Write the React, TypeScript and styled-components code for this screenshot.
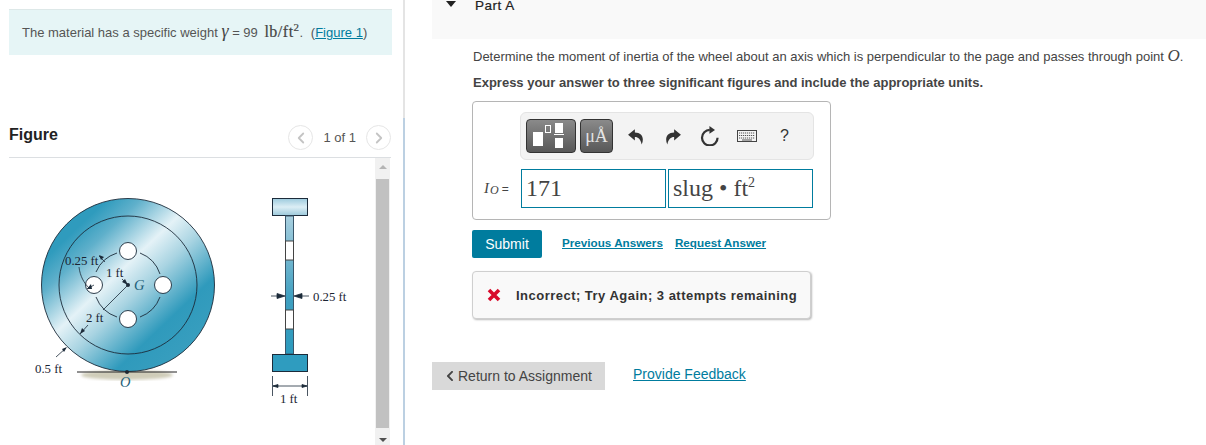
import React from "react";
import styled, { createGlobalStyle } from "styled-components";
import { ChevronLeft, ChevronRight } from "lucide-react";
import { FaChevronLeft } from "react-icons/fa";

const Global = createGlobalStyle`
  html, body { margin: 0; padding: 0; background: #fff; overflow: hidden; }
  body { font-family: "Liberation Sans", Arial, sans-serif; color: #333; }
`;

const Page = styled.div`
  display: flex;
  width: 1206px;
  height: 445px;
  overflow: hidden;
`;

const LeftPane = styled.section`
  width: 403px;
  flex: none;
  padding: 9px 0 0 9px;
  box-sizing: border-box;
  display: flex;
  flex-direction: column;
`;

const Divider = styled.div`
  width: 2px;
  flex: none;
  background: linear-gradient(to bottom, #e4e4e4 0, #e4e4e4 118px, #bcd0e2 118px);
`;

const InfoBox = styled.div`
  width: 383px;
  height: 46px;
  box-sizing: border-box;
  background: #e6f5f6;
  border-top: 1px solid #dde8e8;
  padding: 0 0 2px 13px;
  display: flex;
  align-items: center;
  font-size: 13px;
  color: #555;
`;

const InfoText = styled.p`
  margin: 0;
  white-space: pre;
`;

const MathText = styled.span`
  margin-left: 3px;
  font-family: "Liberation Serif", serif;
  font-size: 16px;
  font-weight: 400;
  color: #444;
  letter-spacing: 0.5px;
  -webkit-text-stroke: 0.2px #444;
  sup { font-size: 11px; line-height: 0; }
`;

const Greek = styled.i`
  font-family: "Liberation Serif", serif;
  font-size: 18px;
  color: #444;
`;

const FigureRef = styled.span`
  margin-left: 4px;
`;

const TextLink = styled.a`
  color: #007c9e;
  text-decoration: underline;
`;

const FigureHeader = styled.header`
  width: 382px;
  height: 48px;
  margin-top: 55px;
  box-sizing: border-box;
  border-bottom: 1px solid #dcdfe2;
  display: flex;
  align-items: center;
  justify-content: space-between;
`;

const FigureTitle = styled.h2`
  margin: 2px 0 0;
  font-size: 16px;
  font-weight: 700;
  color: #222;
`;

const Pager = styled.div`
  display: flex;
  align-items: center;
  gap: 10px;
  font-size: 13px;
  color: #555;
  margin-top: 8px;
`;

const PagerButton = styled.span`
  width: 25px;
  height: 25px;
  box-sizing: border-box;
  border: 1px solid #e6e6e6;
  border-radius: 50%;
  display: flex;
  align-items: center;
  justify-content: center;
  color: #c4c4c4;
`;

const FigureBody = styled.div`
  display: flex;
  width: 382px;
  flex: 1;
  min-height: 0;
`;

const FigureCanvas = styled.svg`
  width: 366px;
  height: 288px;
  flex: none;
  display: block;
`;

const ScrollTrack = styled.div`
  width: 15px;
  height: 288px;
  flex: none;
  background: #f1f1f1;
  display: flex;
  flex-direction: column;
  align-items: center;
  justify-content: space-between;
  padding: 7px 0 4px;
  box-sizing: border-box;
`;

const ScrollThumb = styled.div`
  width: 13px;
  height: 249px;
  background: #c1c1c1;
`;

const ScrollArrowUp = styled.span`
  width: 0;
  height: 0;
  border-left: 4px solid transparent;
  border-right: 4px solid transparent;
  border-bottom: 4px solid #b5b5b5;
`;

const ScrollArrowDown = styled.span`
  width: 0;
  height: 0;
  border-left: 4px solid transparent;
  border-right: 4px solid transparent;
  border-top: 4px solid #505050;
`;

const RightPane = styled.main`
  flex: 1;
  min-width: 0;
  padding-left: 27px;
`;

const PartBand = styled.div`
  height: 39px;
  background: #f9f9f9;
  display: flex;
  align-items: flex-start;
  padding-left: 14px;
  box-sizing: border-box;
`;

const PartCaret = styled.span`
  width: 0;
  height: 0;
  margin-top: 1px;
  border-left: 5px solid transparent;
  border-right: 5px solid transparent;
  border-top: 6px solid #222;
`;

const PartTitle = styled.h3`
  margin: 0 0 0 19px;
  font-size: 13.5px;
  line-height: 11px;
  font-weight: 400;
  letter-spacing: 0.5px;
  color: #222;
  -webkit-text-stroke: 0.2px #222;
`;

const Body = styled.div`
  padding-left: 41px;
`;

const Prompt = styled.p`
  margin: 9px 0 0;
  font-size: 13px;
  line-height: 18px;
  color: #444;
  white-space: nowrap;
`;

const Strong = styled.p`
  margin: 9px 0 0;
  font-size: 13px;
  line-height: 16px;
  font-weight: 700;
  color: #444;
  white-space: nowrap;
`;

const OVar = styled.i`
  font-family: "Liberation Serif", serif;
  font-size: 17px;
  line-height: 0;
`;

const AnswerCard = styled.div`
  margin: 10px 0 0 -1px;
  width: 359px;
  height: 119px;
  box-sizing: border-box;
  border: 1px solid #b5b5b5;
  border-radius: 4px;
  padding: 10px 0 0 47px;
`;

const Toolbar = styled.div`
  width: 294px;
  height: 48px;
  box-sizing: border-box;
  background: #f3f3f3;
  border: 1px solid #e4e4e4;
  border-radius: 6px;
  display: flex;
  align-items: center;
  padding-left: 5px;
`;

const ToolButton = styled.span<{ $w: number }>`
  width: ${(p) => p.$w}px;
  height: 34px;
  margin-right: 4px;
  box-sizing: border-box;
  border: 1px solid #333;
  border-radius: 4px;
  background: linear-gradient(to bottom, #8a8a8a, #585858);
  display: flex;
  align-items: center;
  justify-content: center;
  color: #e4e4e4;
  font-family: "Liberation Serif", serif;
  font-size: 18px;
`;

const ToolIcon = styled.span`
  width: 37.2px;
  height: 34px;
  flex: none;
  display: flex;
  align-items: center;
  justify-content: center;
  color: #333;
  font-size: 16px;
`;

const AnswerRow = styled.div`
  display: flex;
  align-items: center;
  margin: 9px 0 0 -36px;
`;

const AnswerLabel = styled.span`
  width: 37px;
  font-size: 12px;
  color: #444;
  white-space: pre;
`;

const LabelVar = styled.i`
  margin-right: 3px;
  font-family: "Liberation Serif", serif;
  font-size: 15px;
  sub { font-size: 12px; line-height: 0; vertical-align: -1px; margin-left: 1px; }
`;

const Field = styled.div<{ $w: number }>`
  width: ${(p) => p.$w}px;
  height: 39px;
  margin-right: 2px;
  box-sizing: border-box;
  border: 1px solid #007c9e;
  padding-left: 4px;
  display: flex;
  align-items: center;
  font-family: "Liberation Serif", serif;
  font-size: 24px;
  color: #444;
`;

const FieldText = styled.span`
  white-space: pre;
  sup { font-size: 14px; line-height: 0; }
`;

const Actions = styled.div`
  display: flex;
  align-items: flex-start;
  margin: 10px 0 0 -1px;
`;

const Submit = styled.button`
  width: 70px;
  height: 28px;
  border: 0;
  border-radius: 2px;
  padding: 0;
  background: #007c9e;
  color: #fff;
  font: 400 14px "Liberation Sans", sans-serif;
`;

const ActionLinks = styled.div`
  display: flex;
  gap: 12px;
  margin: 5px 0 0 20px;
  font-size: 11.7px;
  font-weight: 700;
  line-height: 16px;
`;

const Feedback = styled.div`
  margin: 13px 0 0 -1px;
  width: 339px;
  height: 48px;
  box-sizing: border-box;
  background: #f9f9f9;
  border: 1px solid #cfcfcf;
  border-radius: 4px;
  box-shadow: 1px 1px 2px #bbb;
  display: flex;
  align-items: center;
  padding-left: 14px;
  font-size: 13px;
  line-height: 18px;
  font-weight: 700;
  color: #333;
  letter-spacing: 0.48px;
  white-space: nowrap;
`;

const FeedbackText = styled.span`
  padding-top: 2px;
`;

const CrossMark = styled.svg`
  width: 14px;
  height: 14px;
  margin-right: 15px;
  flex: none;
`;

const Footer = styled.div`
  display: flex;
  align-items: flex-start;
  margin: 43px 0 0 -41px;
`;

const ReturnButton = styled.div`
  width: 173px;
  height: 28px;
  box-sizing: border-box;
  background: #d9d9d9;
  display: flex;
  align-items: center;
  padding-left: 12px;
  gap: 2px;
  font-size: 14px;
  color: #444;
`;

const FeedbackLink = styled(TextLink)`
  margin: 4px 0 0 28px;
  font-size: 14px;
  line-height: 16px;
`;

const ink = "#1c2b3a";

function WheelFigure() {
  const fontProps = { fontFamily: "Liberation Serif, serif", fontSize: 12.8, fill: "#1a2433" };
  return (
    <FigureCanvas viewBox="9 158 366 288">
      <defs>
        <linearGradient id="wheel" x1="0.12" y1="0.1" x2="0.88" y2="0.9">
          <stop offset="0.1" stopColor="#2f9bbd" />
          <stop offset="0.22" stopColor="#5fb0cb" />
          <stop offset="0.42" stopColor="#e4f2f7" />
          <stop offset="0.56" stopColor="#a9d4e2" />
          <stop offset="0.78" stopColor="#2f9abc" />
          <stop offset="1" stopColor="#3a9fbf" />
        </linearGradient>
        <linearGradient id="flangeTop" x1="0" y1="0" x2="0" y2="1">
          <stop offset="0" stopColor="#9ccadd" />
          <stop offset="0.5" stopColor="#dceef5" />
          <stop offset="1" stopColor="#9cc9db" />
        </linearGradient>
        <linearGradient id="web" x1="0" y1="0" x2="0" y2="1">
          <stop offset="0" stopColor="#a8cfdf" />
          <stop offset="0.6" stopColor="#3f9fc0" />
          <stop offset="1" stopColor="#2b9abd" />
        </linearGradient>
        <filter id="soft"><feGaussianBlur stdDeviation="1.6" /></filter>
      </defs>

      <ellipse cx="127" cy="375" rx="46" ry="5" fill="#cfccb8" filter="url(#soft)" />
      <circle cx="128" cy="285" r="86.5" fill="url(#wheel)" stroke={ink} strokeWidth="0.9" />
      <circle cx="128" cy="285" r="69" fill="none" stroke={ink} strokeWidth="0.9" />
      <g fill="none" stroke={ink} strokeWidth="0.9">
        <path d="M140 253 A34 34 0 0 1 160 274" />
        <path d="M160 297 A34 34 0 0 1 140 317" />
        <path d="M117 317 A34 34 0 0 1 96 297" />
        <path d="M96 272 A34 34 0 0 1 117 253" />
      </g>
      <g fill="#fff" stroke={ink} strokeWidth="0.9">
        <circle cx="128" cy="251" r="8.5" />
        <circle cx="128" cy="319" r="8.5" />
        <circle cx="94" cy="285" r="8.5" />
        <circle cx="163" cy="285" r="8.5" />
      </g>
      <g fill="none" stroke={ink} strokeWidth="0.8">
        <path d="M79 267 C80 276 84 283 89 288" />
        <path d="M94 285 L87 289" />
        <path d="M99 256 L105 262" />
        <path d="M122 279 L128 285 L103 310" />
        <path d="M88 325 L80 334" />
        <path d="M66 348 L56 357" />
      </g>
      <g fill={ink}>
        <path d="M87 289 L91 284 L92 289 Z" />
        <path d="M99 255 L104 257 L101 260 Z" />
        <path d="M128 285 L122 282 L125 279 Z" />
        <path d="M80 334 L82 328 L85 331 Z" />
        <path d="M67 347 L62 349 L64 352 Z" />
        <circle cx="128" cy="285" r="2" />
        <circle cx="127" cy="372" r="2" />
      </g>
      <path d="M77 372 H177" stroke="#222" strokeWidth="1" />
      <text x="65" y="265" {...fontProps}>0.25 ft</text>
      <text x="106" y="277" {...fontProps}>1 ft</text>
      <text x="86" y="322" {...fontProps}>2 ft</text>
      <text x="35" y="373" {...fontProps}>0.5 ft</text>
      <text x="134" y="290" {...fontProps} fontStyle="italic" fontSize="14.5" fill="#1f5f7a">G</text>
      <text x="120" y="387" {...fontProps} fontStyle="italic" fontSize="14.5" fill="#1f5f7a">O</text>

      <rect x="272.5" y="198.5" width="35" height="17" fill="url(#flangeTop)" stroke={ink} />
      <rect x="285.5" y="216" width="8" height="138" fill="url(#web)" stroke="#39566a" />
      <rect x="285.5" y="241" width="8" height="19" fill="#fff" stroke="#444" />
      <rect x="285.5" y="310" width="8" height="19" fill="#fff" stroke="#444" />
      <rect x="272.5" y="354.5" width="35" height="17" fill="#2f9cbf" stroke={ink} />
      <g stroke={ink} strokeWidth="0.8" fill={ink}>
        <path d="M271 296 H283" />
        <path d="M296 296 H309" />
        <path d="M285 296 L277 293.5 V298.5 Z" />
        <path d="M294 296 L302 293.5 V298.5 Z" />
        <path d="M272.5 376 V396 M307.5 376 V396 M273 386 H307" fill="none" />
        <path d="M273 386 L278 384.5 V387.5 Z M307 386 L302 384.5 V387.5 Z" />
      </g>
      <text x="313" y="301" {...fontProps}>0.25 ft</text>
      <text x="280" y="403" {...fontProps}>1 ft</text>
    </FigureCanvas>
  );
}

function TemplateIcon() {
  return (
    <svg width="48" height="32" viewBox="0 0 48 32">
      <rect x="6" y="12" width="10" height="14" fill="#fff" />
      <rect x="18.5" y="5.5" width="5" height="7" fill="none" stroke="#fff" />
      <rect x="28" y="3" width="8" height="10" fill="#fff" />
      <rect x="27" y="14" width="10" height="1" fill="#fff" />
      <rect x="28" y="18" width="8" height="10" fill="#fff" />
    </svg>
  );
}

function UndoIcon({ flip }: { flip?: boolean }) {
  return (
    <svg width="16" height="17" viewBox="0 0 14 15" style={flip ? { transform: "scaleX(-1)" } : undefined}>
      <path d="M6 1 L0 6 L6 11 V8 C9 8 11 10 12 14.5 C14.5 9 12.5 4 6 4 Z" fill="#333" />
    </svg>
  );
}

function RefreshIcon() {
  return (
    <svg width="20" height="20" viewBox="0 0 18 18">
      <path d="M15.8 10.5 A7 7 0 1 1 8.8 3.5" fill="none" stroke="#333" strokeWidth="2" />
      <path d="M8.5 0 L13.5 3.5 L8.5 7 Z" fill="#333" />
    </svg>
  );
}

function KeyboardIcon() {
  return (
    <svg width="20" height="12" viewBox="0 0 20 12">
      <rect x="0.5" y="0.5" width="19" height="11" fill="#f4f4f4" stroke="#444" />
      <path d="M2 3h16M2 5.5h16M2 8h16" stroke="#555" strokeDasharray="1.2 0.8" />
      <path d="M5 10h10" stroke="#555" />
    </svg>
  );
}

export default function App() {
  return (
    <>
      <Global />
      <Page>
        <LeftPane>
          <InfoBox>
            <InfoText>
              The material has a specific weight <Greek>γ</Greek> = 99 <MathText>lb/ft<sup>2</sup></MathText>. <FigureRef>(<TextLink>Figure 1</TextLink>)</FigureRef>
            </InfoText>
          </InfoBox>
          <FigureHeader>
            <FigureTitle>Figure</FigureTitle>
            <Pager>
              <PagerButton><ChevronLeft size={18} strokeWidth={2.4} /></PagerButton>
              <span>1 of 1</span>
              <PagerButton><ChevronRight size={18} strokeWidth={2.4} /></PagerButton>
            </Pager>
          </FigureHeader>
          <FigureBody>
            <WheelFigure />
            <ScrollTrack>
              <ScrollArrowUp />
              <ScrollThumb />
              <ScrollArrowDown />
            </ScrollTrack>
          </FigureBody>
        </LeftPane>
        <Divider />
        <RightPane>
          <PartBand>
            <PartCaret />
            <PartTitle>Part A</PartTitle>
          </PartBand>
          <Body>
            <Prompt>
              Determine the moment of inertia of the wheel about an axis which is perpendicular to the page and passes through point <OVar>O</OVar>.
            </Prompt>
            <Strong>Express your answer to three significant figures and include the appropriate units.</Strong>
            <AnswerCard>
              <Toolbar>
                <ToolButton $w={50}><TemplateIcon /></ToolButton>
                <ToolButton $w={33}>μÅ</ToolButton>
                <ToolIcon><UndoIcon /></ToolIcon>
                <ToolIcon><UndoIcon flip /></ToolIcon>
                <ToolIcon><RefreshIcon /></ToolIcon>
                <ToolIcon><KeyboardIcon /></ToolIcon>
                <ToolIcon>?</ToolIcon>
              </Toolbar>
              <AnswerRow>
                <AnswerLabel><LabelVar>I<sub>O</sub></LabelVar>= </AnswerLabel>
                <Field $w={145}><FieldText>171</FieldText></Field>
                <Field $w={145}><FieldText>slug • ft<sup>2</sup></FieldText></Field>
              </AnswerRow>
            </AnswerCard>
            <Actions>
              <Submit>Submit</Submit>
              <ActionLinks>
                <TextLink>Previous Answers</TextLink>
                <TextLink>Request Answer</TextLink>
              </ActionLinks>
            </Actions>
            <Feedback>
              <CrossMark viewBox="0 0 14 14">
                <path d="M2 2 L12 12 M12 2 L2 12" stroke="#d8092b" strokeWidth="3.6" />
              </CrossMark>
              <FeedbackText>Incorrect; Try Again; 3 attempts remaining</FeedbackText>
            </Feedback>
            <Footer>
              <ReturnButton><FaChevronLeft size={12} />Return to Assignment</ReturnButton>
              <FeedbackLink>Provide Feedback</FeedbackLink>
            </Footer>
          </Body>
        </RightPane>
      </Page>
    </>
  );
}
